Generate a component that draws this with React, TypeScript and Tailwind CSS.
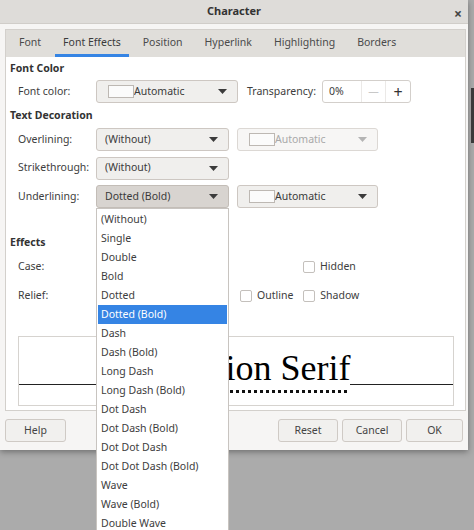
import React from "react";

const font = { fontFamily: '"Noto Sans", "Open Sans", sans-serif' };

const tabs = ["Font", "Font Effects", "Position", "Hyperlink", "Highlighting", "Borders"];

const underlineOptions = [
  "(Without)",
  "Single",
  "Double",
  "Bold",
  "Dotted",
  "Dotted (Bold)",
  "Dash",
  "Dash (Bold)",
  "Long Dash",
  "Long Dash (Bold)",
  "Dot Dash",
  "Dot Dash (Bold)",
  "Dot Dot Dash",
  "Dot Dot Dash (Bold)",
  "Wave",
  "Wave (Bold)",
  "Double Wave",
];

function Caret({ disabled }: { disabled?: boolean }) {
  return (
    <svg width="9" height="5" viewBox="0 0 9 5" className="shrink-0">
      <path d="M0 0h9L4.5 5z" fill={disabled ? "#b4b4b4" : "#3b3b3b"} />
    </svg>
  );
}

function Swatch() {
  return <span className="inline-block w-[26px] h-[13px] border border-[#bdb8b3] bg-[#fbfbfb] shrink-0" />;
}

function Select({
  label,
  width,
  pressed,
  disabled,
  swatch,
}: {
  label: string;
  width: string;
  pressed?: boolean;
  disabled?: boolean;
  swatch?: boolean;
}) {
  return (
    <div
      className={`${width} h-[23px] flex items-center rounded-[3px] border pr-[10px] ${
        swatch ? "pl-[11px]" : "pl-[8px]"
      } ${
        pressed
          ? "bg-[#d8d4d0] border-[#c3bdb7]"
          : disabled
          ? "bg-[#f7f6f5] border-[#dcd8d4]"
          : "bg-[#f0efed] border-[#cdc7c2]"
      }`}
    >
      {swatch && <Swatch />}
      <span className={`flex-1 truncate ${disabled ? "text-[#a9a9a9]" : "text-[#3a3a3a]"}`}>{label}</span>
      <Caret disabled={disabled} />
    </div>
  );
}

function Check({ label }: { label: string }) {
  return (
    <div className="flex items-center gap-[5px]">
      <span className="w-[12px] h-[12px] rounded-[2px] border border-[#c4c0bc] bg-white" />
      <span>{label}</span>
    </div>
  );
}

function Row({ label, children }: { label: string; children: React.ReactNode }) {
  return (
    <div className="flex items-center h-[23px]">
      <span className="w-[86px] pl-[8px]">{label}</span>
      {children}
    </div>
  );
}

function Button({ label, width }: { label: string; width: string }) {
  return (
    <div
      className={`${width} h-[23px] flex items-center justify-center rounded-[3px] border border-[#cfcac5] bg-[#f1f0ee] text-[#444]`}
    >
      {label}
    </div>
  );
}

export default function App() {
  return (
    <div className="relative w-[474px] h-[530px] overflow-hidden bg-[#ababab] text-[10.5px] text-[#3d3d3d]" style={font}>
      <div className="absolute right-0 top-[88px] w-[3px] h-[55px] bg-[#3a3a3a]" />
      {/* dialog window */}
      <div className="w-[468px] h-[450px] bg-[#f6f5f4] flex flex-col shadow-[0_2px_6px_rgba(0,0,0,0.35)]">
        {/* title bar */}
        <div className="h-[24px] shrink-0 bg-[#dedcd9] border-b border-[#d0cdc9] flex items-center relative">
          <span className="flex-1 text-center font-bold text-[11px] text-[#333]">Character</span>
          <span className="absolute right-[6px] top-[3px] text-[14px] font-bold text-[#444]">×</span>
        </div>

        {/* notebook */}
        <div className="mt-[5px] ml-[5px] w-[461px] h-[382px] border border-[#d3d0cc] bg-white flex flex-col">
          <div className="h-[27px] shrink-0 bg-[#e0deda] flex items-stretch pl-[5px]">
            {tabs.map((t) => (
              <div
                key={t}
                className={`px-[8px] mr-[6px] flex items-center border-b-[3px] pt-[2px] ${
                  t === "Font Effects" ? "border-[#3584e4] text-[#3a3a3a]" : "border-transparent text-[#4a4a4a]"
                }`}
              >
                {t}
              </div>
            ))}
          </div>

          <div className="flex flex-col px-[4px]">
            <div className="h-[23px] flex items-center font-bold text-[#333]">Font Color</div>
            <Row label="Font color:">
              <Select label="Automatic" width="w-[142px]" swatch />
              <span className="ml-[9px] w-[75px]">Transparency:</span>
              <div className="w-[89px] h-[23px] flex items-stretch border border-[#d3cfcb] rounded-[3px] bg-white">
                <span className="flex-1 flex items-center pl-[6px]">0%</span>
                <span className="w-[24px] flex items-center justify-center border-l border-[#ebe9e7] text-[#c8c8c8]">—</span>
                <span className="w-[25px] flex items-center justify-center border-l border-[#ebe9e7] text-[16px] text-[#333]">+</span>
              </div>
            </Row>

            <div className="h-[25px] flex items-center font-bold text-[#333]">Text Decoration</div>
            <div className="flex flex-col gap-[5.5px]">
              <Row label="Overlining:">
                <Select label="(Without)" width="w-[133px]" />
                <div className="ml-[8px]">
                  <Select label="Automatic" width="w-[141px]" swatch disabled />
                </div>
              </Row>
              <Row label="Strikethrough:">
                <Select label="(Without)" width="w-[133px]" />
              </Row>
              <Row label="Underlining:">
                <Select label="Dotted (Bold)" width="w-[133px]" pressed />
                <div className="ml-[8px]">
                  <Select label="Automatic" width="w-[141px]" swatch />
                </div>
              </Row>
            </div>

            <div className="h-[22px] mt-[24px] flex items-center font-bold text-[#333]">Effects</div>
            <div className="h-[24px] mt-px flex items-center">
              <span className="w-[86px] pl-[8px]">Case:</span>
              <div className="ml-[207px]">
                <Check label="Hidden" />
              </div>
            </div>
            <div className="h-[24px] mt-[5px] flex items-center">
              <span className="w-[86px] pl-[8px]">Relief:</span>
              <div className="ml-[144px] flex items-center gap-[10px]">
                <Check label="Outline" />
                <Check label="Shadow" />
              </div>
            </div>

            {/* preview */}
            <div className="mt-[28px] ml-[8px] w-[436px] h-[70px] border border-[#d6d3cf] bg-white relative overflow-hidden">
              <div className="absolute left-0 right-0 top-[47px] h-px bg-[#222]" />
              <div className="absolute inset-x-0 top-[13px] flex justify-center">
                <div className="relative bg-white">
                  <span
                    className="block text-[36px] leading-[36px] text-black"
                    style={{ fontFamily: '"Liberation Serif", serif' }}
                  >
                    Liberation Serif
                  </span>
                  <div className="absolute left-0 right-0 top-[40px] h-[3px] bg-[repeating-linear-gradient(90deg,#111_0_3px,transparent_3px_6px)]" />
                </div>
              </div>
            </div>
          </div>
        </div>

        {/* buttons */}
        <div className="mt-[8px] px-[5px] flex items-center">
          <Button label="Help" width="w-[61px]" />
          <div className="flex-1" />
          <div className="flex gap-[4px]">
            <Button label="Reset" width="w-[60px]" />
            <Button label="Cancel" width="w-[60px]" />
            <Button label="OK" width="w-[57px]" />
          </div>
        </div>
      </div>

      {/* open dropdown list */}
      <div className="absolute left-[96px] top-[208px] w-[133px] bg-white border border-[#c8c4c0] pt-px pl-px pr-px">
        {underlineOptions.map((o) => (
          <div
            key={o}
            className={`h-[19px] flex items-center pl-[3px] ${
              o === "Dotted (Bold)" ? "bg-[#3584e4] text-white" : "text-[#3d3d3d]"
            }`}
          >
            {o}
          </div>
        ))}
      </div>
    </div>
  );
}
